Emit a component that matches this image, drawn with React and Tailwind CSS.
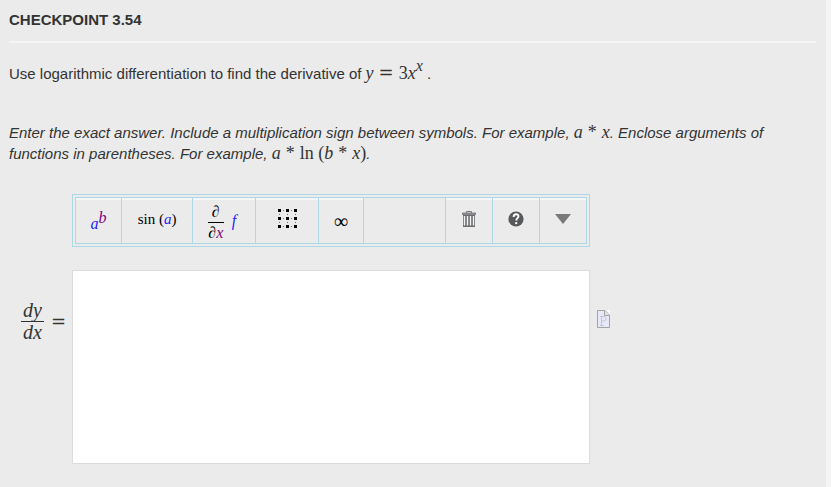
import { useState } from 'react';

const MATH = "font-['Liberation_Serif'] italic";
const CELL = 'h-full shrink-0 border-l border-[#add8e6] flex items-center justify-center';
const KEY = `${CELL} shadow-[inset_0_2px_0_#f5f5f5] pb-1 hover:bg-white/40`;

function Var({ children }) {
  return <span className="font-['Liberation_Serif'] text-lg leading-5 italic">{children}</span>;
}

function Op({ children }) {
  return <span className="font-['Liberation_Serif'] text-lg leading-5 not-italic">{children}</span>;
}

function Star() {
  return <span className="px-[5px] font-['Liberation_Serif'] text-lg leading-5 not-italic">*</span>;
}

function Equals() {
  return <span className="px-[5px] font-['DejaVu_Serif'] text-lg leading-5 not-italic">=</span>;
}

function MatrixIcon() {
  const steps = [0, 8, 16];
  return (
    <svg width="19" height="19" viewBox="0 0 19 19" shapeRendering="crispEdges" aria-hidden="true">
      {steps.map((y) => steps.map((x) => (
        <rect key={`${x}-${y}`} x={x} y={y} width="3" height="3" fill="#000" />
      )))}
      {steps.map((a) => [5, 13].map((b) => (
        <g key={`${a}-${b}`} fill="#777">
          <rect x={b} y={a + 1} width="1" height="1" />
          <rect x={a + 1} y={b} width="1" height="1" />
        </g>
      )))}
    </svg>
  );
}

function TrashIcon() {
  return (
    <svg width="14" height="16" viewBox="0 0 14 16" aria-hidden="true">
      <path d="M4.5 2V.5h5V2" fill="none" stroke="#77797b" />
      <path d="M0 1.5h14V4H0z" fill="#85878a" />
      <path d="M1 4h12v12H1z" fill="#6b6d6f" />
      <path d="M2.5 5v9.5M5.5 5v9.5M8.5 5v9.5M11.5 5v9.5" stroke="#f2f2f2" strokeWidth="1.4" />
    </svg>
  );
}

function HelpIcon() {
  return (
    <svg width="16" height="16" viewBox="0 0 16 16" aria-hidden="true">
      <circle cx="8" cy="8" r="7.6" fill="#58595b" />
      <path d="M5.6 5.9C5.6 4.1 6.6 3.2 8.1 3.2c1.4 0 2.4.8 2.4 2.1 0 1.9-2.2 1.9-2.2 4.2" fill="none" stroke="#fff" strokeWidth="1.9" />
      <circle cx="8.2" cy="12.1" r="1.2" fill="#fff" />
    </svg>
  );
}

function PreviewIcon() {
  return (
    <svg width="13" height="18" viewBox="0 0 13 18" aria-hidden="true">
      <path d="M8 0h5v5z" fill="#fff" />
      <path d="M.5.5h7.5l4.5 4.5v12.5H.5z" fill="#e8e8fb" stroke="#a3a3a3" />
      <path d="M7.5.5v5h5" fill="#e4e4e4" stroke="#a3a3a3" />
      <path d="M3 6.5h4.2q1.8 0 1.8 2.2t-1.8 2.3H5M4.5 6.5v9M3 15.5h3.5" fill="none" stroke="#c4c4cd" />
    </svg>
  );
}

function Toolbar({ onClear }) {
  return (
    <div className="w-full border border-[#add8e6] p-0.5">
      <div className="flex h-[47px] border-y border-r border-[#add8e6] text-black">
        <button type="button" aria-label="Exponent" className={`${KEY} w-[46px]`}>
          <span className={`${MATH} flex pt-1 text-base leading-4`}>
            <span className="pt-1.5 text-[#1f1fff]">a</span>
            <span className="text-[#800080]">b</span>
          </span>
        </button>
        <button type="button" className={`${KEY} w-[71px]`}>
          <span className="font-['Liberation_Serif'] text-[15px] leading-4">
            sin (<span className="italic text-[#1f1fff]">a</span>)
          </span>
        </button>
        <button type="button" aria-label="Partial derivative" className={`${KEY} w-[63px] gap-1`}>
          <span className={`${MATH} flex flex-col pt-2 text-center text-base leading-4`}>
            <span className="border-b border-black px-1 pb-0.5">∂</span>
            <span className="pt-0.5">∂<span className="text-[#800080]">x</span></span>
          </span>
          <span className={`${MATH} px-1 pt-1 text-base leading-4 text-[#1f1fff]`}>f</span>
        </button>
        <button type="button" aria-label="Matrix" className={`${KEY} w-[63px]`}>
          <MatrixIcon />
        </button>
        <button type="button" className={`${KEY} w-[45px]`}>
          <span className="font-['Liberation_Serif'] pt-1 text-xl leading-4">∞</span>
        </button>
        <div className={`${CELL} min-w-0 flex-1`} />
        <button type="button" aria-label="Clear" onClick={onClear} className={`${KEY} w-[47px]`}>
          <TrashIcon />
        </button>
        <button type="button" aria-label="Help" className={`${KEY} w-[47px]`}>
          <HelpIcon />
        </button>
        <button type="button" aria-label="More" className={`${KEY} w-[47px]`}>
          <svg width="16" height="10" viewBox="0 0 16 10" aria-hidden="true">
            <path d="M0 0h16L8 10z" fill="#77797a" />
          </svg>
        </button>
      </div>
    </div>
  );
}

export default function App() {
  const [answer, setAnswer] = useState('');

  return (
    <div className="min-h-screen bg-white pr-[7px] font-['Liberation_Sans',sans-serif] text-[15px] leading-5 text-[#333]">
      <main className="min-h-screen border-r-[5px] border-[#f5f5f5] bg-[#ebebeb] pr-2.5 pl-[9px]">
        <h1 className="border-b-2 border-[#f5f5f5] pt-2.5 pb-[11px] font-bold">CHECKPOINT 3.54</h1>

        <p className="pt-5">
          Use logarithmic differentiation to find the derivative of{' '}
          <Var>y</Var><Equals /><Op>3</Op><Var>x</Var>
          <sup className="font-['Liberation_Serif'] text-base leading-none italic">x</sup>
          {' '}.
        </p>

        <p className="pt-[38px] leading-[21px] italic">
          Enter the exact answer. Include a multiplication sign between symbols. For example,{' '}
          <Var>a</Var><Star /><Var>x</Var>. Enclose arguments of functions in parentheses.
          For example, <Var>a</Var><Star /><Op>ln (</Op><Var>b</Var><Star /><Var>x</Var><Op>)</Op>.
        </p>

        <div className="grid grid-cols-[63px_minmax(0,518px)_auto] pt-[30px]">
          <div className="col-start-2">
            <Toolbar onClear={() => setAnswer('')} />
          </div>

          <label htmlFor="answer" className="col-start-1 mt-[54px] flex h-10 items-center pl-3">
            <span className={`${MATH} flex flex-col text-center text-xl leading-[18px]`}>
              <span className="border-b border-[#333] px-0.5 pb-0.5">dy</span>
              <span className="pt-px">dx</span>
            </span>
            <span className="pt-0.5 pl-0.5"><Equals /></span>
          </label>
          <textarea
            id="answer"
            value={answer}
            onChange={(e) => setAnswer(e.target.value)}
            className="mt-[23px] h-[194px] w-full resize-none border border-[#dcdcdc] bg-white p-2 focus:outline-none"
          />
          <button type="button" aria-label="Preview" className="mt-[63px] ml-[7px] h-[18px] w-[13px]">
            <PreviewIcon />
          </button>
        </div>
      </main>
    </div>
  );
}
